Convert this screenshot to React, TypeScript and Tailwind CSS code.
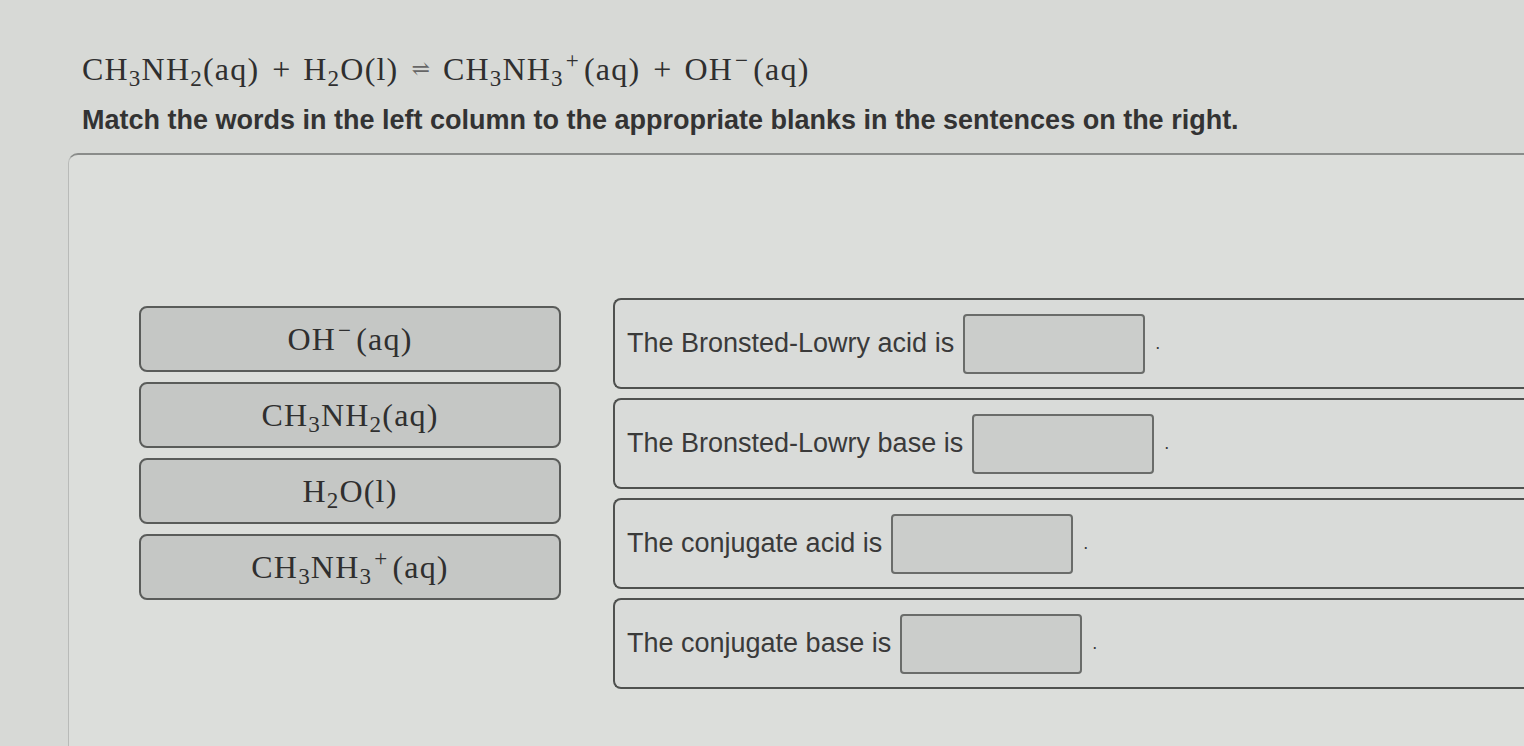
import React from "react";

const serif = { fontFamily: '"Liberation Serif", "DejaVu Serif", serif' };

type Piece = { t: string; sub?: string; sup?: string };

// a formula written as runs of text with optional sub / superscripts
function Formula({ parts }: { parts: Piece[] }) {
  return (
    <span style={serif} className="whitespace-nowrap tracking-[1.2px]">
      {parts.map((p, i) => (
        <React.Fragment key={i}>
          {p.t}
          {p.sub && <sub className="text-[0.72em]">{p.sub}</sub>}
          {p.sup && <sup className="text-[0.72em] ml-[2px] mr-[4px]">{p.sup}</sup>}
        </React.Fragment>
      ))}
    </span>
  );
}

const methylamine: Piece[] = [{ t: "CH", sub: "3" }, { t: "NH", sub: "2" }, { t: "(aq)" }];
const water: Piece[] = [{ t: "H", sub: "2" }, { t: "O(l)" }];
const methylammonium: Piece[] = [{ t: "CH", sub: "3" }, { t: "NH", sub: "3" }, { t: "", sup: "+" }, { t: "(aq)" }];
const hydroxide: Piece[] = [{ t: "OH", sup: "−" }, { t: "(aq)" }];

const tiles = [hydroxide, methylamine, water, methylammonium];

const sentences = [
  "The Bronsted-Lowry acid is",
  "The Bronsted-Lowry base is",
  "The conjugate acid is",
  "The conjugate base is",
];

export default function App() {
  return (
    <div className="w-[1524px] h-[746px] overflow-hidden bg-[#d7d9d6] text-[#2f2f2f]">
      <div className="pl-[82px] pt-[44px]">
        <div className="text-[32px] leading-[50px] flex items-center gap-[13px]">
          <Formula parts={methylamine} />
          <span style={serif}>+</span>
          <Formula parts={water} />
          <span style={serif} className="text-[22px] text-[#666]">⇌</span>
          <Formula parts={methylammonium} />
          <span style={serif}>+</span>
          <Formula parts={hydroxide} />
        </div>
        <p
          className="mt-[9px] text-[27px] font-bold leading-[34px] text-[#333]"
          style={{ fontFamily: '"Liberation Sans", Arial, sans-serif' }}
        >
          Match the words in the left column to the appropriate blanks in the sentences on the right.
        </p>
      </div>

      <div className="ml-[68px] mt-[16px] w-[1520px] h-[600px] rounded-tl-[10px] border-t-2 border-l border-t-[#8a8c8a] border-l-[#b8bab8] bg-[#dcdedb] flex items-start gap-[52px] pl-[70px] pt-[143px]">
        {/* word bank */}
        <div className="w-[422px] mt-[8px] flex flex-col gap-[10px]">
          {tiles.map((parts, i) => (
            <div
              key={i}
              className="h-[66px] rounded-[8px] border-2 border-[#5a5c5a] bg-[#c5c7c5] flex items-center justify-center text-[32px]"
            >
              <Formula parts={parts} />
            </div>
          ))}
        </div>

        {/* sentences with drop targets */}
        <div
          className="flex-1 flex flex-col gap-[9px]"
          style={{ fontFamily: '"Liberation Sans", Arial, sans-serif' }}
        >
          {sentences.map((text) => (
            <div
              key={text}
              className="h-[91px] rounded-l-[8px] border-2 border-r-0 border-[#4f514f] bg-[#d9dbd9] flex items-center pl-[12px] text-[27px] text-[#3a3a3a]"
            >
              <span>{text}</span>
              <span className="ml-[9px] h-[60px] w-[182px] rounded-[4px] border-2 border-[#6a6c6a] bg-[#cbcdcb]" />
              <span className="ml-[10px] text-[18px]">.</span>
            </div>
          ))}
        </div>
      </div>
    </div>
  );
}
